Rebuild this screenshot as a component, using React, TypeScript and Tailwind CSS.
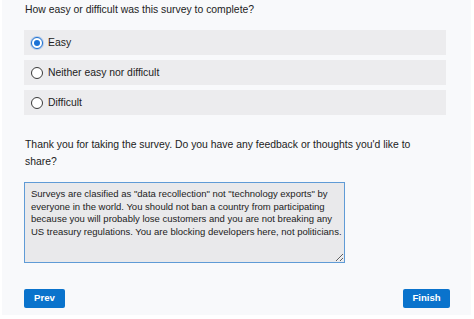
import React from "react";

const font = { fontFamily: '"Liberation Sans", Arial, Helvetica, sans-serif' };

function Radio({ checked }: { checked?: boolean }) {
  if (checked) {
    return (
      <div className="w-[12px] h-[12px] rounded-full border-[1.5px] border-[#1b6fcf] bg-white flex items-center justify-center shadow-[0_0_0_1px_rgba(90,150,230,0.35)]">
        <div className="w-[6px] h-[6px] rounded-full bg-[#1b72d6]" />
      </div>
    );
  }
  return <div className="w-[12px] h-[12px] rounded-full border border-[#3a3a3a] bg-white" />;
}

function Option({ label, checked }: { label: string; checked?: boolean }) {
  return (
    <div className="w-[422px] h-[25px] bg-[#ececee] flex items-center pl-[7px] gap-[5px]">
      <Radio checked={checked} />
      <span className="text-[10.4px] text-[#222]">{label}</span>
    </div>
  );
}

export default function App() {
  const text =
    'Surveys are clasified as "data recollection" not "technology exports" by\neveryone in the world. You should not ban a country from participating\nbecause you will probably lose customers and you are not breaking any\nUS treasury regulations. You are blocking developers here, not politicians.';
  return (
    <div className="w-[474px] h-[319px] bg-white overflow-hidden" style={font}>
      <div className="ml-[2px] w-[469px] h-[315px] bg-[#f8f9fb] pl-[22px] flex flex-col">
        <div className="pt-[1px] pl-[1px] text-[10.4px] leading-[17px] text-[#222]">
          How easy or difficult was this survey to complete?
        </div>
        <div className="mt-[12px] flex flex-col gap-[5px]">
          <Option label="Easy" checked />
          <Option label="Neither easy nor difficult" />
          <Option label="Difficult" />
        </div>
        <div className="mt-[21px] pl-[1px] w-[400px] text-[10.4px] leading-[17px] text-[#222]">
          Thank you for taking the survey. Do you have any feedback or thoughts you'd like to share?
        </div>
        <textarea
          readOnly
          wrap="off"
          defaultValue={text}
          className="mt-[12px] w-[321px] h-[81px] bg-[#e9e9eb] border-[1.5px] border-[#5f9bd6] pl-[6px] pr-[1px] pt-[5px] text-[9.5px] leading-[12.5px] text-[#222] outline-none overflow-hidden whitespace-pre"
          style={font}
        />
        <div className="mt-[26px] w-[426px] flex justify-between">
          <button className="w-[41px] h-[19px] rounded-[2px] bg-[#0a73cc] text-white text-[9.6px] font-bold">
            Prev
          </button>
          <button className="w-[47px] h-[19px] rounded-[2px] bg-[#0a73cc] text-white text-[9.6px] font-bold">
            Finish
          </button>
        </div>
      </div>
    </div>
  );
}
